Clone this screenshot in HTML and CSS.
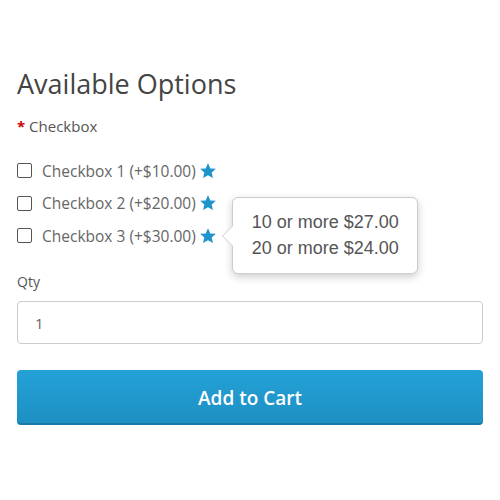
FILE: index.html
```html
<!DOCTYPE html>
<html>
<head>
<meta charset="utf-8">
<link rel="stylesheet" href="styles.css">
</head>
<body>
<div class="product">
  <h3 class="title">Available Options</h3>
  <div class="group">
    <label class="group-label"><span class="req">*</span> Checkbox</label>
    <div class="options">
      <div class="option">
        <span class="box"></span>
        <span class="text">Checkbox 1 (+$10.00)</span>
        <svg class="star" viewBox="0 0 24 24"><path d="M12 1.5l3.1 7 7.4.6-5.6 4.9 1.7 7.4L12 17.5l-6.6 3.9 1.7-7.4L1.5 9.1l7.4-.6z"/></svg>
      </div>
      <div class="option">
        <span class="box"></span>
        <span class="text">Checkbox 2 (+$20.00)</span>
        <svg class="star" viewBox="0 0 24 24"><path d="M12 1.5l3.1 7 7.4.6-5.6 4.9 1.7 7.4L12 17.5l-6.6 3.9 1.7-7.4L1.5 9.1l7.4-.6z"/></svg>
      </div>
      <div class="option">
        <span class="box"></span>
        <span class="text">Checkbox 3 (+$30.00)</span>
        <span class="star-wrap">
          <svg class="star" viewBox="0 0 24 24"><path d="M12 1.5l3.1 7 7.4.6-5.6 4.9 1.7 7.4L12 17.5l-6.6 3.9 1.7-7.4L1.5 9.1l7.4-.6z"/></svg>
          <div class="tooltip">
            <div>10 or more $27.00</div>
            <div>20 or more $24.00</div>
          </div>
        </span>
      </div>
    </div>
  </div>
  <div class="qty">
    <label class="qty-label">Qty</label>
    <div class="input">1</div>
  </div>
  <button class="cart">Add to Cart</button>
</div>
</body>
</html>
```

FILE: styles.css
```css
html, body {
  margin: 0;
  padding: 0;
  background: #fff;
}
body {
  font-family: "Open Sans", "DejaVu Sans", sans-serif;
  color: #666;
}
.product {
  width: 466px;
  padding: 64px 0 0 17px;
}
.title {
  margin: 0;
  font-size: 27px;
  font-weight: 400;
  line-height: 40px;
  color: #444;
}
.group {
  margin-top: 12px;
}
.group-label {
  display: block;
  font-size: 15px;
  line-height: 20px;
  color: #555;
}
.req {
  color: #c00;
  font-weight: 700;
}
.options {
  margin-top: 24px;
  display: flex;
  flex-direction: column;
  gap: 11.5px;
}
.option {
  display: flex;
  align-items: center;
  height: 21px;
  font-size: 15.5px;
  color: #666;
}
.box {
  width: 13px;
  height: 13px;
  border: 1px solid #555;
  border-radius: 2px;
  margin-right: 10px;
}
.star {
  width: 18px;
  height: 18px;
  fill: #1e94cd;
  margin-left: 3px;
  display: block;
}
.star-wrap {
  position: relative;
  display: block;
}
.tooltip {
  position: absolute;
  left: 36px;
  top: -30px;
  width: 165px;
  padding: 11px 0 12px 19px;
  background: #fff;
  border: 1px solid #ccc;
  border-radius: 6px;
  box-shadow: 0 3px 8px rgba(0,0,0,0.2);
  font-family: "Liberation Sans", Arial, sans-serif;
  font-size: 18px;
  line-height: 26px;
  color: #555;
  white-space: nowrap;
}
.tooltip::before {
  content: "";
  position: absolute;
  left: -11px;
  top: 27px;
  border-style: solid;
  border-width: 11px 11px 11px 0;
  border-color: transparent #ccc transparent transparent;
}
.tooltip::after {
  content: "";
  position: absolute;
  left: -10px;
  top: 27px;
  border-style: solid;
  border-width: 11px 11px 11px 0;
  border-color: transparent #fff transparent transparent;
}
.qty {
  margin-top: 26px;
}
.qty-label {
  display: block;
  font-size: 14px;
  line-height: 20px;
  color: #555;
}
.input {
  margin-top: 9px;
  border: 1px solid #ccc;
  border-radius: 4px;
  box-sizing: border-box;
  height: 43px;
  padding: 0 17px;
  display: flex;
  align-items: center;
  font-size: 15px;
  color: #666;
}
.cart {
  display: block;
  margin-top: 26px;
  width: 466px;
  height: 55px;
  border: 0;
  border-radius: 4px;
  background: linear-gradient(#23a1d7, #1e8fc2);
  box-shadow: inset 0 -2px 0 rgba(0,0,0,0.15);
  color: #fff;
  font-family: "Open Sans", sans-serif;
  font-size: 19px;
  font-weight: 600;
}
```
